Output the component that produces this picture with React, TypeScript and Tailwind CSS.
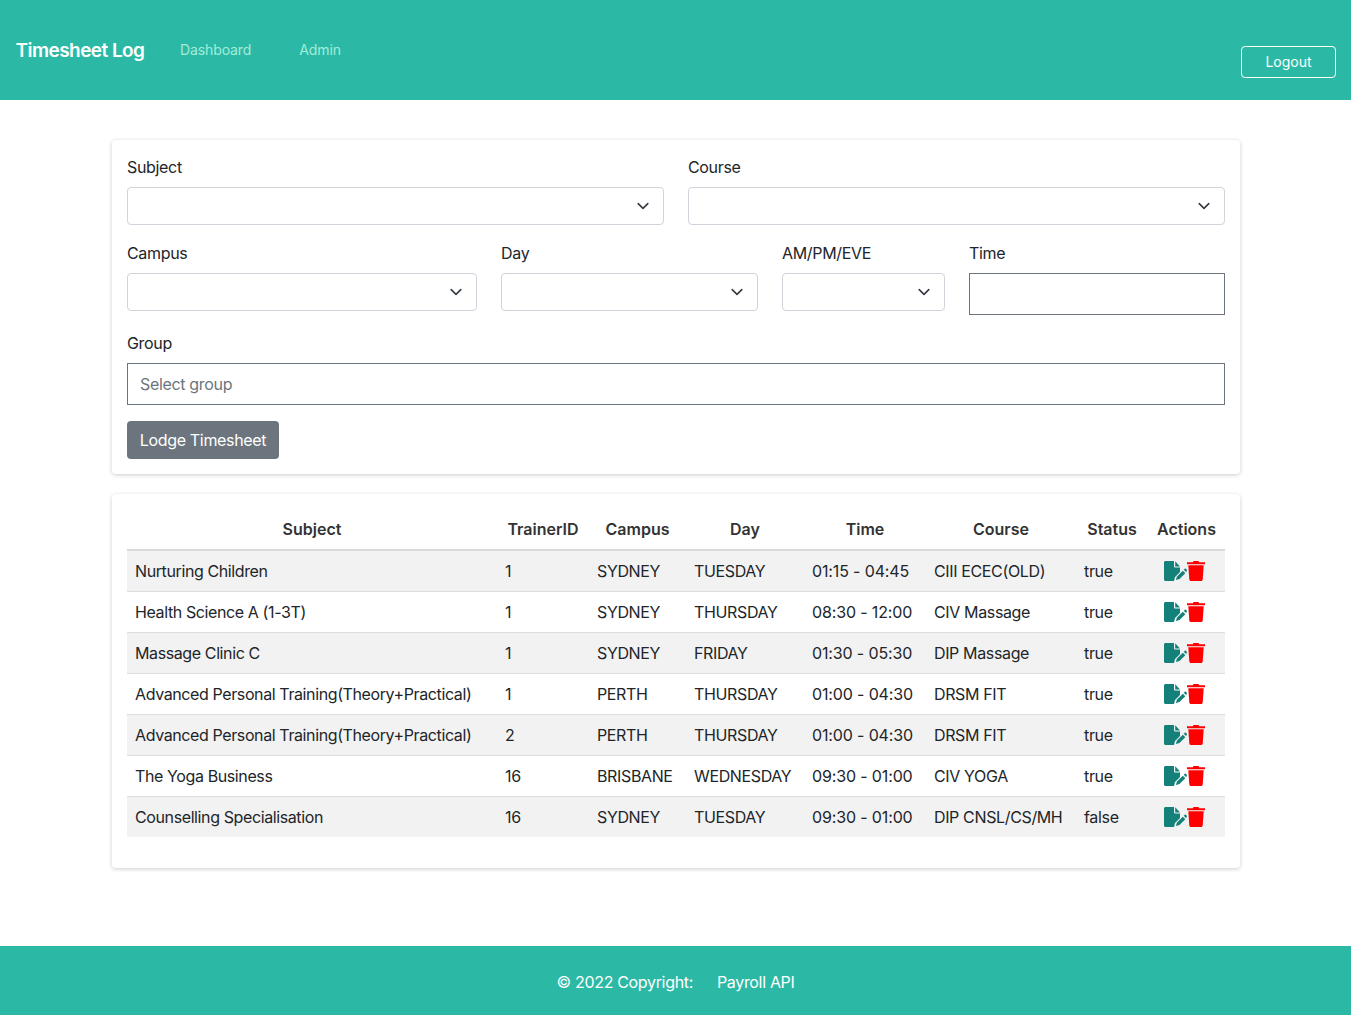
const rows = [
  ["Nurturing Children", "1", "SYDNEY", "TUESDAY", "01:15 - 04:45", "CIII ECEC(OLD)", "true"],
  ["Health Science A (1-3T)", "1", "SYDNEY", "THURSDAY", "08:30 - 12:00", "CIV Massage", "true"],
  ["Massage Clinic C", "1", "SYDNEY", "FRIDAY", "01:30 - 05:30", "DIP Massage", "true"],
  ["Advanced Personal Training(Theory+Practical)", "1", "PERTH", "THURSDAY", "01:00 - 04:30", "DRSM FIT", "true"],
  ["Advanced Personal Training(Theory+Practical)", "2", "PERTH", "THURSDAY", "01:00 - 04:30", "DRSM FIT", "true"],
  ["The Yoga Business", "16", "BRISBANE", "WEDNESDAY", "09:30 - 01:00", "CIV YOGA", "true"],
  ["Counselling Specialisation", "16", "SYDNEY", "TUESDAY", "09:30 - 01:00", "DIP CNSL/CS/MH", "false"],
];
const heads = ["Subject", "TrainerID", "Campus", "Day", "Time", "Course", "Status", "Actions"];
const widths = ["w-[370px]", "w-[92px]", "w-[97px]", "w-[118px]", "w-[122px]", "w-[150px]", "w-[72px]", "w-[77px]"];
const cellTracking = ["tracking-[-0.39px]", "", "tracking-[-0.36px]", "tracking-[-0.36px]", "tracking-[-0.14px]", "tracking-[-0.36px]", "", ""];

function Chevron() {
  return (
    <svg width="16" height="16" viewBox="0 0 16 16" fill="none" className="shrink-0">
      <path d="M2 5l6 6 6-6" stroke="#343a40" strokeWidth="2" strokeLinecap="round" strokeLinejoin="round" transform="translate(1.6 1.6) scale(0.8)" />
    </svg>
  );
}

function Select({ label, className }: { label: string; className: string }) {
  return (
    <div className={className}>
      <label className="mb-2 block h-6 leading-6">{label}</label>
      <div className="flex h-[38px] items-center justify-end rounded border border-[#ced4da] bg-white pr-3">
        <Chevron />
      </div>
    </div>
  );
}

function EditIcon() {
  return (
    <svg width="23" height="20" viewBox="0 0 23 20">
      <path d="M1.500 0H10V5c0 1 .6 1.600 1.500 1.600H16V11L11 16 10 20H1.500C.7 20 0 19.300 0 18.500V1.500C0 .7.7 0 1.500 0z" fill="#14807a" />
      <path d="M11.200 .2L16 5.400H11.200z" fill="#14807a" />
      <path d="M13 15.500L18.800 9.700 21.300 12.200 15.500 18 11.800 19z" fill="#14807a" />
      <path d="M19.700 8.800L20.600 7.900c.5-.5 1-.5 1.400 0l.6.6c.5.500.5 1 0 1.400L22.200 11.300z" fill="#14807a" />
    </svg>
  );
}

function TrashIcon() {
  return (
    <svg width="18" height="20" viewBox="0 0 18 20">
      <path d="M6.500 0h5l.6 1.200H18v2H0v-2h5.900z" fill="#ff0000" />
      <path d="M1.300 4.200h15.400l-1 14.300c-.1.900-.8 1.500-1.600 1.500H3.900c-.8 0-1.500-.6-1.600-1.500z" fill="#ff0000" />
    </svg>
  );
}

export default function App() {
  return (
    <div className="flex min-h-[1015px] flex-col bg-white font-['Inter',sans-serif] text-base tracking-[-0.33px] text-[#212529]">
      <header className="flex h-[100px] shrink-0 bg-[#2bb9a6] pr-[15px] pl-[15.5px]">
        <a className="mt-[39px] h-6 text-[19px] leading-6 font-semibold tracking-[-0.55px] text-white">Timesheet Log</a>
        <nav className="ml-[35.5px] flex gap-12 pt-[41px] text-sm leading-[18px] tracking-[-0.1px] text-[#a3ecd9]">
          <a>Dashboard</a>
          <a>Admin</a>
        </nav>
        <button className="mt-[46px] ml-auto h-8 w-[95px] rounded border border-white text-sm tracking-normal text-white">Logout</button>
      </header>

      <main className="ml-[112px] flex w-[1128px] flex-1 flex-col gap-5 pt-10">
        <section className="h-[334px] rounded bg-white px-[15px] pt-[15px] shadow-[0_1px_4px_rgba(0,0,0,0.2)]">
          <div className="flex gap-6">
            <Select label="Subject" className="w-[537px]" />
            <Select label="Course" className="w-[537px]" />
          </div>
          <div className="mt-4 flex gap-6">
            <Select label="Campus" className="w-[350px]" />
            <Select label="Day" className="w-[257px]" />
            <Select label="AM/PM/EVE" className="w-[163px]" />
            <div className="w-[256px]">
              <label className="mb-2 block h-6 leading-6">Time</label>
              <input className="block h-[42px] w-full border border-[#6c757d] bg-white px-3" />
            </div>
          </div>
          <div className="mt-4">
            <label className="mb-2 block h-6 leading-6">Group</label>
            <input placeholder="Select group" className="block h-[42px] w-full border border-[#6c757d] bg-white px-3 placeholder:text-[#6c757d]" />
          </div>
          <button className="mt-4 h-[38px] w-[152px] rounded bg-[#6c757d] text-white">Lodge Timesheet</button>
        </section>

        <section className="h-[374px] rounded bg-white px-[15px] pt-[15px] shadow-[0_1px_4px_rgba(0,0,0,0.2)]">
          <table className="w-[1098px] table-fixed border-collapse">
            <thead>
              <tr className="h-[41px] border-b-2 border-[#dadada]">
                {heads.map((h, i) => (
                  <th key={h} className={`${widths[i]} text-center font-semibold tracking-normal text-[#333333]`}>{h}</th>
                ))}
              </tr>
            </thead>
            <tbody>
              {rows.map((r, i) => (
                <tr key={i} className={`h-[41px] border-b border-[#dddddd] last:border-b-0 ${i % 2 === 0 ? "bg-[#f2f2f2]" : "bg-white"}`}>
                  {r.map((c, j) => (
                    <td key={j} className={`px-2 whitespace-nowrap ${cellTracking[j]}`}>{c}</td>
                  ))}
                  <td className="px-2">
                    <div className="flex items-center pl-2">
                      <EditIcon />
                      <TrashIcon />
                    </div>
                  </td>
                </tr>
              ))}
            </tbody>
          </table>
        </section>
      </main>

      <footer className="flex h-[69px] shrink-0 items-center justify-center gap-6 bg-[#2bb9a6] pt-[2px] text-white">
        <span>© 2022 Copyright:</span>
        <a>Payroll API</a>
      </footer>
    </div>
  );
}
